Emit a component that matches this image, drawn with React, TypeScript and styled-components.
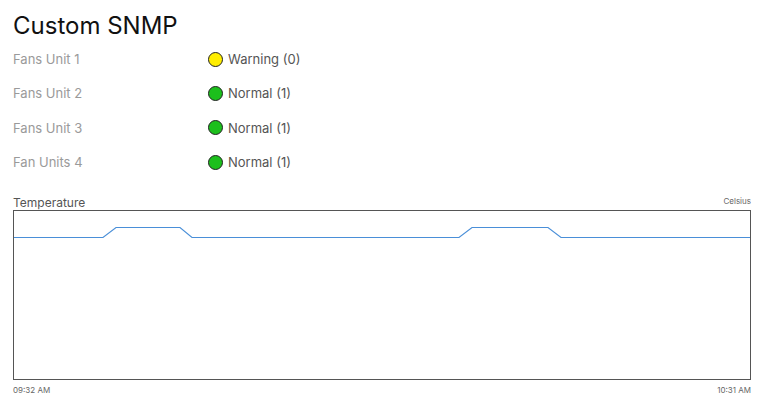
import React from "react";
import styled, { createGlobalStyle } from "styled-components";

const GlobalStyle = createGlobalStyle`
  html, body {
    margin: 0;
    padding: 0;
    background: #ffffff;
  }
  body {
    font-family: Inter, "Open Sans", sans-serif;
  }
`;

const Page = styled.div`
  padding: 10px 7px 0 13px;
`;

const Title = styled.h1`
  margin: 0;
  font-size: 24px;
  line-height: 32px;
  font-weight: 400;
  color: #111;
`;

const List = styled.div`
  display: flex;
  flex-direction: column;
`;

const Row = styled.div`
  display: flex;
  align-items: center;
  height: 34.3px;
`;

const Label = styled.div`
  width: 195px;
  font-size: 13px;
  color: #9a9a9a;
`;

const Status = styled.div`
  display: flex;
  align-items: center;
  gap: 5px;
  font-size: 13px;
  color: #555;
`;

const Dot = styled.span<{ $color: string }>`
  display: inline-block;
  width: 13px;
  height: 13px;
  border-radius: 50%;
  border: 1px solid #222;
  background: ${(p) => p.$color};
`;

const Chart = styled.div`
  margin-top: 16px;
`;

const ChartHeader = styled.div`
  display: flex;
  justify-content: space-between;
  align-items: flex-end;
`;

const ChartTitle = styled.div`
  font-size: 12px;
  line-height: 15px;
  color: #555;
`;

const Unit = styled.div`
  font-size: 8px;
  line-height: 10px;
  color: #666;
  padding-bottom: 4px;
`;

const Plot = styled.div`
  height: 168px;
  border: 1px solid #555;
`;

const Axis = styled.div`
  display: flex;
  justify-content: space-between;
  font-size: 8px;
  line-height: 10px;
  color: #666;
  margin-top: 5px;
`;

const rows = [
  { name: "Fans Unit 1", status: "Warning (0)", color: "#ffee00" },
  { name: "Fans Unit 2", status: "Normal (1)", color: "#1cbf1c" },
  { name: "Fans Unit 3", status: "Normal (1)", color: "#1cbf1c" },
  { name: "Fan Units 4", status: "Normal (1)", color: "#1cbf1c" },
];

// line points in plot coordinates (x from left border, y from top border)
const points = [
  [0, 26.5],
  [89, 26.5],
  [102, 16.5],
  [166, 16.5],
  [178, 26.5],
  [445, 26.5],
  [458, 16.5],
  [534, 16.5],
  [547, 26.5],
  [738, 26.5],
];

const App: React.FC = () => {
  return (
    <>
      <GlobalStyle />
      <Page>
        <Title>Custom SNMP</Title>
        <List>
          {rows.map((r) => (
            <Row key={r.name}>
              <Label>{r.name}</Label>
              <Status>
                <Dot $color={r.color} />
                {r.status}
              </Status>
            </Row>
          ))}
        </List>
        <Chart>
          <ChartHeader>
            <ChartTitle>Temperature</ChartTitle>
            <Unit>Celsius</Unit>
          </ChartHeader>
          <Plot>
            <svg width="100%" height="168" viewBox="0 0 736 168" preserveAspectRatio="none">
              <polyline
                points={points.map((p) => p.join(",")).join(" ")}
                fill="none"
                stroke="#4a8fd8"
                strokeWidth="1.2"
              />
            </svg>
          </Plot>
          <Axis>
            <span>09:32 AM</span>
            <span>10:31 AM</span>
          </Axis>
        </Chart>
      </Page>
    </>
  );
};

export default App;
